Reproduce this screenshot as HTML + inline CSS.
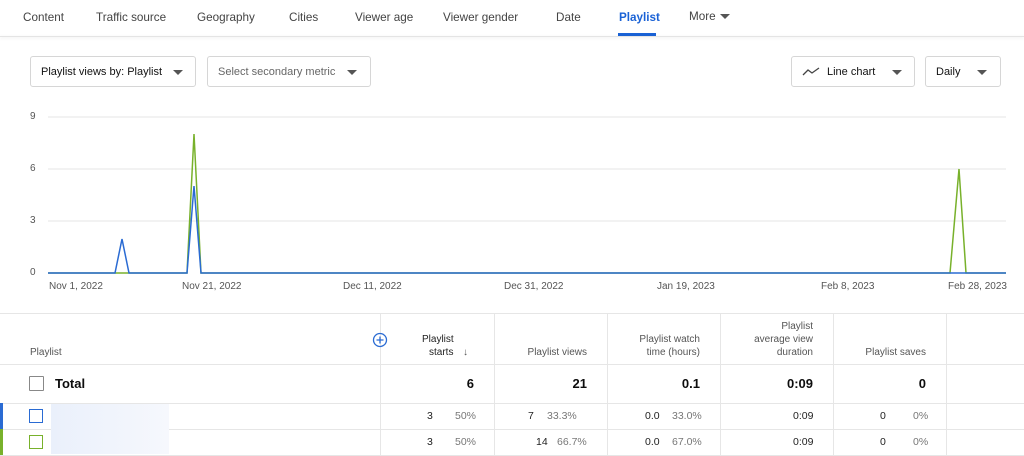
<!DOCTYPE html><html><head><style>
body{margin:0;width:1024px;height:456px;overflow:hidden;background:#fff;font-family:"Liberation Sans",sans-serif;position:relative;color:#0d0d0d}
.a{position:absolute;white-space:nowrap}
.tab{font-size:11.7px;color:#444;top:11px}
.btn{position:absolute;border:1px solid #d6d6d6;border-radius:3px;height:31px;top:56px;font-size:11px;line-height:31px;box-sizing:border-box}
.tri{position:absolute;width:0;height:0;border-left:5px solid transparent;border-right:5px solid transparent;border-top:5px solid #555;top:13px}
.ax{font-size:10px;color:#555}
.h{font-size:10px;color:#555;text-align:right;line-height:13px}
.vl{position:absolute;top:313px;height:143px;width:1px;background:#e6e6e6}
.hl{position:absolute;left:0;width:1024px;height:1px;background:#e6e6e6}
.n{font-size:10.5px;color:#222}.p{font-size:10.5px;color:#777}
.b{font-size:13px;font-weight:bold}
</style></head><body>
<div class="a tab" style="left:23px">Content</div>
<div class="a tab" style="left:96px">Traffic source</div>
<div class="a tab" style="left:197px">Geography</div>
<div class="a tab" style="left:289px">Cities</div>
<div class="a tab" style="left:355px">Viewer age</div>
<div class="a tab" style="left:443px">Viewer gender</div>
<div class="a tab" style="left:556px">Date</div>
<div class="a tab" style="left:619px;color:#1a62d6;font-weight:bold">Playlist</div>
<div style="position:absolute;left:618px;top:33px;width:38px;height:3px;background:#1a62d6"></div>
<div class="a tab" style="left:689px;top:10px">More</div>
<div class="tri" style="left:720px;top:14px"></div>
<div style="position:absolute;left:0;top:36px;width:1024px;height:1px;background:#e4e4e4;box-shadow:0 1px 3px rgba(0,0,0,.12)"></div>

<div class="btn" style="left:30px;width:166px"><span style="margin-left:10px;color:#111">Playlist views by: Playlist</span><div class="tri" style="left:142px"></div></div>
<div class="btn" style="left:207px;width:164px"><span style="margin-left:10px;color:#666">Select secondary metric</span><div class="tri" style="left:139px"></div></div>
<div class="btn" style="left:791px;width:124px"><svg style="position:absolute;left:10px;top:10px" width="18" height="10"><path d="M1 8 L6 3 L10 6 L17 1" fill="none" stroke="#444" stroke-width="1.3"/></svg><span style="margin-left:35px;color:#111">Line chart</span><div class="tri" style="left:100px"></div></div>
<div class="btn" style="left:925px;width:76px"><span style="margin-left:10px;color:#111">Daily</span><div class="tri" style="left:51px"></div></div>

<svg class="a" style="left:0;top:0" width="1024" height="300">
<g stroke="#e6e6e6"><line x1="48" y1="117" x2="1006" y2="117"/><line x1="48" y1="169" x2="1006" y2="169"/><line x1="48" y1="221" x2="1006" y2="221"/></g>
<polyline fill="none" stroke="#78b12b" stroke-width="1.5" points="48,273 187,273 194,134 201,273 950,273 959,169 966,273 1006,273"/>
<polyline fill="none" stroke="#2a6bd3" stroke-width="1.5" points="48,273 115,273 122,239 129,273 187,273 194,186 201,273 1006,273"/>
</svg>
<div class="a ax" style="left:30px;top:111px">9</div>
<div class="a ax" style="left:30px;top:163px">6</div>
<div class="a ax" style="left:30px;top:215px">3</div>
<div class="a ax" style="left:30px;top:267px">0</div>
<div class="a ax" style="left:49px;top:281px">Nov 1, 2022</div>
<div class="a ax" style="left:182px;top:281px">Nov 21, 2022</div>
<div class="a ax" style="left:343px;top:281px">Dec 11, 2022</div>
<div class="a ax" style="left:504px;top:281px">Dec 31, 2022</div>
<div class="a ax" style="left:657px;top:281px">Jan 19, 2023</div>
<div class="a ax" style="left:821px;top:281px">Feb 8, 2023</div>
<div class="a ax" style="left:948px;top:281px">Feb 28, 2023</div>

<div class="hl" style="top:313px"></div>
<div class="hl" style="top:364px"></div>
<div class="hl" style="top:403px"></div>
<div class="hl" style="top:429px"></div>
<div class="hl" style="top:455px"></div>
<div class="vl" style="left:380px"></div><div class="vl" style="left:494px"></div><div class="vl" style="left:607px"></div><div class="vl" style="left:720px"></div><div class="vl" style="left:833px"></div><div class="vl" style="left:946px"></div>

<div class="a h" style="left:30px;top:346px">Playlist</div>
<svg class="a" style="left:372px;top:332px" width="16" height="16"><circle cx="8" cy="8" r="6.5" fill="none" stroke="#2a6bd3" stroke-width="1.3"/><path d="M8 4.5V11.5M4.5 8H11.5" stroke="#2a6bd3" stroke-width="1.3"/></svg>
<div class="a h" style="left:422px;top:333px;color:#222">Playlist</div>
<div class="a h" style="left:429px;top:346px;color:#222">starts</div>
<div class="a h" style="left:463px;top:346px">↓</div>
<div class="a h" style="right:437px;top:346px">Playlist views</div>
<div class="a h" style="right:324px;top:333px">Playlist watch<br>time (hours)</div>
<div class="a h" style="right:211px;top:320px">Playlist<br>average view<br>duration</div>
<div class="a h" style="right:98px;top:346px">Playlist saves</div>

<div style="position:absolute;left:29px;top:376px;width:13px;height:13px;border:1.5px solid #888;border-radius:1px"></div>
<div class="a b" style="left:55px;top:376px">Total</div>
<div class="a b" style="right:550px;top:376px">6</div>
<div class="a b" style="right:437px;top:376px">21</div>
<div class="a b" style="right:324px;top:376px">0.1</div>
<div class="a b" style="right:211px;top:376px">0:09</div>
<div class="a b" style="right:98px;top:376px">0</div>

<div style="position:absolute;left:0;top:403px;width:3px;height:26px;background:#2a6bd3"></div>
<div style="position:absolute;left:0;top:429px;width:3px;height:26px;background:#78b12b"></div>
<div style="position:absolute;left:29px;top:409px;width:12px;height:12px;border:1.5px solid #2a6bd3"></div>
<div style="position:absolute;left:29px;top:435px;width:12px;height:12px;border:1.5px solid #78b12b"></div>
<div style="position:absolute;left:51px;top:404px;width:118px;height:50px;background:linear-gradient(90deg,#eaf0fb,#f6f8fd)"></div>

<div class="a n" style="left:427px;top:410px">3</div><div class="a p" style="left:455px;top:410px">50%</div>
<div class="a n" style="left:528px;top:410px">7</div><div class="a p" style="left:547px;top:410px">33.3%</div>
<div class="a n" style="left:645px;top:410px">0.0</div><div class="a p" style="left:672px;top:410px">33.0%</div>
<div class="a n" style="left:793px;top:410px">0:09</div>
<div class="a n" style="left:880px;top:410px">0</div><div class="a p" style="left:913px;top:410px">0%</div>

<div class="a n" style="left:427px;top:436px">3</div><div class="a p" style="left:455px;top:436px">50%</div>
<div class="a n" style="left:536px;top:436px">14</div><div class="a p" style="left:557px;top:436px">66.7%</div>
<div class="a n" style="left:645px;top:436px">0.0</div><div class="a p" style="left:672px;top:436px">67.0%</div>
<div class="a n" style="left:793px;top:436px">0:09</div>
<div class="a n" style="left:880px;top:436px">0</div><div class="a p" style="left:913px;top:436px">0%</div>
</body></html>
